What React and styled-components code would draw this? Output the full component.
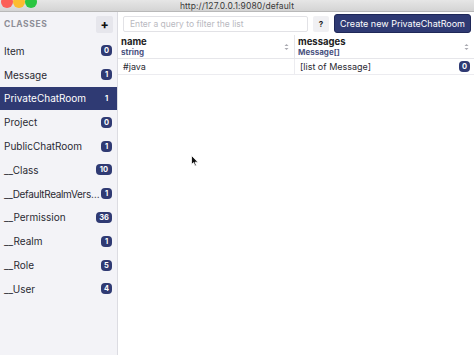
import React from 'react';
import styled, {createGlobalStyle} from 'styled-components';

const GlobalStyle = createGlobalStyle`
  html, body {
    margin: 0;
    padding: 0;
    background: #ffffff;
    font-family: Inter, "Noto Sans", "Liberation Sans", sans-serif;
  }
`

const Window = styled.div`
  width: 474px;
  height: 355px;
  display: flex;
  flex-direction: column;
  overflow: hidden;
  position: relative;
`

const TitleBar = styled.div`
  height: 11px;
  flex: none;
  display: flex;
  align-items: center;
  justify-content: center;
  position: relative;
  background: linear-gradient(#e6e6e6, #d4d4d4);
  border-bottom: 1px solid #b9b9b9;
  font-size: 8.5px;
  color: #3a3a3a;
  letter-spacing: 0.1px;
`

const Lights = styled.div`
  position: absolute;
  left: 1px;
  top: -4px;
  display: flex;
`

const Light = styled.span`
  width: 12px;
  height: 12px;
  border-radius: 50%;
  background: ${p => p.color};
`

const Body = styled.div`
  flex: 1;
  display: flex;
  min-height: 0;
`

const Sidebar = styled.div`
  width: 117px;
  flex: none;
  background: #f3f3f7;
  border-right: 1px solid #dcdce2;
  display: flex;
  flex-direction: column;
`

const SideHeader = styled.div`
  height: 24px;
  display: flex;
  align-items: center;
  justify-content: space-between;
  padding: 0 4px;
  margin-bottom: 3px;
`

const SideTitle = styled.span`
  font-size: 8.5px;
  font-weight: 700;
  color: #8d8d96;
  letter-spacing: 0.6px;
`

const PlusButton = styled.span`
  width: 17px;
  height: 17px;
  display: flex;
  align-items: center;
  justify-content: center;
  background: #e6e6ec;
  border-radius: 2px;
  font-size: 12px;
  font-weight: 800;
  color: #111;
`

const ClassRow = styled.div`
  height: 23.8px;
  display: flex;
  align-items: center;
  justify-content: space-between;
  gap: 2px;
  padding: 0 5px 0 4px;
  font-size: 10px;
  background: ${p => (p.$active ? '#2f3a73' : 'transparent')};
  color: ${p => (p.$active ? '#ffffff' : '#2a2a33')};
`

const ClassName = styled.span`
  white-space: nowrap;
  letter-spacing: ${p => (p.$tight ? '-0.35px' : 'normal')};
`

const Badge = styled.span`
  flex: none;
  min-width: ${p => (p.$wide ? '16px' : '11px')};
  height: 11px;
  padding: 0 2px;
  box-sizing: border-box;
  border-radius: 4px;
  display: flex;
  align-items: center;
  justify-content: center;
  font-size: 7.5px;
  font-weight: 700;
  color: #ffffff;
  background: ${p => (p.$active ? 'transparent' : '#2f3a73')};
`

const Main = styled.div`
  flex: 1;
  display: flex;
  flex-direction: column;
`

const TopBar = styled.div`
  height: 23px;
  display: flex;
  align-items: center;
  gap: 5px;
  padding: 0 3px 0 5px;
`

const Search = styled.div`
  flex: 1;
  height: 16px;
  display: flex;
  align-items: center;
  background: #ffffff;
  border: 1px solid #e2e2e6;
  border-radius: 2px;
  padding: 0 6px;
  font-size: 8.5px;
  color: #b9b9c0;
  box-sizing: border-box;
`

const HelpButton = styled.span`
  width: 16px;
  height: 16px;
  display: flex;
  align-items: center;
  justify-content: center;
  background: #f0f0f3;
  border-radius: 2px;
  font-size: 8px;
  font-weight: 700;
  color: #222;
`

const CreateButton = styled.span`
  height: 17px;
  display: flex;
  align-items: center;
  padding: 0 5px;
  background: #2f3a73;
  border: 1px solid #1f2858;
  border-radius: 3px;
  font-size: 9px;
  color: #ffffff;
  white-space: nowrap;
`

const Grid = styled.div`
  display: grid;
  grid-template-columns: 177px 1fr;
`

const HeadCell = styled.div`
  height: 24px;
  display: flex;
  align-items: center;
  justify-content: space-between;
  padding: 1px 5px 0 3px;
  box-sizing: border-box;
  border-bottom: 1px solid #e6e6ea;
  border-right: ${p => (p.$last ? 'none' : '1px solid #e6e6ea')};
`

const HeadText = styled.div`
  display: flex;
  flex-direction: column;
  line-height: 11px;
`

const ColName = styled.span`
  font-size: 9.5px;
  font-weight: 700;
  color: #1c1c22;
`

const ColType = styled.span`
  font-size: 8px;
  font-weight: 700;
  color: #4a5280;
`

const Cell = styled.div`
  height: 15px;
  display: flex;
  align-items: center;
  justify-content: space-between;
  padding: 0 4px 0 5px;
  font-size: 9px;
  color: #2a2a33;
  border-bottom: 1px solid #ececf0;
  border-right: ${p => (p.$last ? 'none' : '1px solid #ececf0')};
`

const Cursor = styled.svg`
  position: absolute;
  left: 191px;
  top: 155px;
`

const SortIcon = () => (
  <svg width="5" height="8" viewBox="0 0 5 8">
    <path d="M0.5 3 L2.5 1 L4.5 3 Z M0.5 5 L2.5 7 L4.5 5 Z" fill="#a9a9b0" />
  </svg>
)

// long names are shown already shortened, as the sidebar does
const classes = [
  ['Item', 0],
  ['Message', 1],
  ['PrivateChatRoom', 1],
  ['Project', 0],
  ['PublicChatRoom', 1],
  ['__Class', 10],
  ['__DefaultRealmVers…', 1],
  ['__Permission', 36],
  ['__Realm', 1],
  ['__Role', 5],
  ['__User', 4],
];

export default function App() {
  return (
    <Window>
      <GlobalStyle />
      <TitleBar>
        <Lights>
          <Light color="#fc5f57" />
          <Light color="#fdbc2e" />
          <Light color="#2bc641" />
        </Lights>
        http://127.0.0.1:9080/default
      </TitleBar>
      <Body>
        <Sidebar>
          <SideHeader>
            <SideTitle>CLASSES</SideTitle>
            <PlusButton>+</PlusButton>
          </SideHeader>
          {classes.map(([name, count]) => {
            const active = name === 'PrivateChatRoom';
            return (
              <ClassRow key={name} $active={active}>
                <ClassName $tight={name.length > 16}>{name}</ClassName>
                <Badge $active={active} $wide={count > 9}>{count}</Badge>
              </ClassRow>
            );
          })}
        </Sidebar>
        <Main>
          <TopBar>
            <Search>Enter a query to filter the list</Search>
            <HelpButton>?</HelpButton>
            <CreateButton>Create new PrivateChatRoom</CreateButton>
          </TopBar>
          <Grid>
            <HeadCell>
              <HeadText>
                <ColName>name</ColName>
                <ColType>string</ColType>
              </HeadText>
              <SortIcon />
            </HeadCell>
            <HeadCell $last>
              <HeadText>
                <ColName>messages</ColName>
                <ColType>Message[]</ColType>
              </HeadText>
              <SortIcon />
            </HeadCell>
            <Cell>#java</Cell>
            <Cell $last>
              [list of Message]
              <Badge>0</Badge>
            </Cell>
          </Grid>
        </Main>
      </Body>
      <Cursor width="8" height="12" viewBox="0 0 8 12">
        <path d="M0.5 0.5 L0.5 9.5 L2.6 7.6 L4 11 L5.4 10.4 L4 7.2 L7 7.2 Z" fill="#111" stroke="#fff" strokeWidth="0.8" />
      </Cursor>
    </Window>
  );
}
